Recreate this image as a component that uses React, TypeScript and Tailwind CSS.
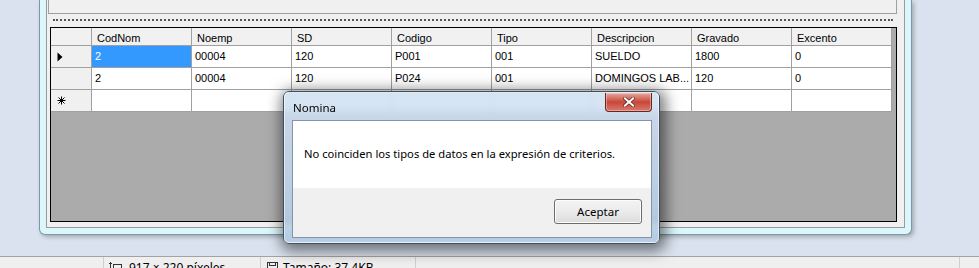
import type { ReactNode } from "react";

const columns = ["CodNom", "Noemp", "SD", "Codigo", "Tipo", "Descripcion", "Gravado", "Excento"];

const rows = [
  ["2", "00004", "120", "P001", "001", "SUELDO", "1800", "0"],
  ["2", "00004", "120", "P024", "001", "DOMINGOS LAB...", "120", "0"],
];

const gridFont = { fontFamily: '"Liberation Sans", Arial, sans-serif' };
const uiFont = { fontFamily: '"Noto Sans", "Liberation Sans", sans-serif' };

function RowHeader({ children }: { children?: ReactNode }) {
  return (
    <div className="flex w-[41px] shrink-0 items-center border-r border-[#a0a0a0] bg-[#f0f0f0] pl-[6px]">
      {children}
    </div>
  );
}

function DataGrid() {
  return (
    <div
      className="ml-[3px] mt-[6px] h-[195px] w-[847px] border border-black bg-[#ababab] text-[11px] text-black"
      style={gridFont}
    >
      {/* header */}
      <div className="flex h-[18px] w-[841px] border-b border-[#a0a0a0] bg-[#f1f1f1]">
        <div className="w-[41px] shrink-0 border-r border-[#a0a0a0]" />
        {columns.map((c) => (
          <div
            key={c}
            className="w-[100px] shrink-0 border-r border-[#a0a0a0] pl-[5px] pt-[3px] leading-[14px]"
          >
            {c}
          </div>
        ))}
      </div>

      {/* data rows */}
      {rows.map((r, i) => (
        <div key={i} className="flex h-[22px] w-[841px] border-b border-[#a0a0a0] bg-white">
          <RowHeader>
            {i === 0 && (
              <svg width="6" height="10" viewBox="0 0 6 10">
                <path d="M0.5 0.5 L5.5 5 L0.5 9.5 Z" fill="#000" />
              </svg>
            )}
          </RowHeader>
          {r.map((v, j) => (
            <div
              key={j}
              className={`w-[100px] shrink-0 overflow-hidden whitespace-nowrap border-r border-[#a0a0a0] pl-[3px] leading-[21px] ${
                i === 0 && j === 0 ? "bg-[#3399ff] text-white" : ""
              }`}
            >
              {v}
            </div>
          ))}
        </div>
      ))}

      {/* new row */}
      <div className="flex h-[22px] w-[841px] border-b border-[#a0a0a0] bg-white">
        <RowHeader>
          <svg width="9" height="9" viewBox="0 0 9 9">
            <path d="M4.5 0.5 V8.5 M0.5 4.5 H8.5 M1.5 1.5 L7.5 7.5 M7.5 1.5 L1.5 7.5" stroke="#000" strokeWidth="1" />
          </svg>
        </RowHeader>
        {columns.map((c) => (
          <div key={c} className="w-[100px] shrink-0 border-r border-[#a0a0a0]" />
        ))}
      </div>
    </div>
  );
}

function MessageBox() {
  return (
    <div
      className="absolute left-[283px] top-[91px] h-[153px] w-[377px] rounded-[6px] border border-[#404f60] bg-[rgba(186,210,236,0.82)] shadow-[2px_3px_14px_4px_rgba(0,0,0,0.5)] backdrop-blur-[3px]"
      style={uiFont}
    >
      <div className="flex h-full flex-col rounded-[5px] border border-[rgba(255,255,255,0.55)] bg-gradient-to-b from-[rgba(255,255,255,0.3)] to-[rgba(160,185,210,0.25)] px-[6px] pb-[4px]">
        {/* title bar */}
        <div className="flex h-[27px] items-center justify-between">
          <span className="pl-[2px] pt-[3px] text-[11.5px] text-black">Nomina</span>
          <div className="flex h-[19px] w-[47px] items-center justify-center self-start rounded-b-[4px] border border-t-0 border-[#6b2520] bg-gradient-to-b from-[#e6a69c] via-[#c8463a] to-[#d77a6d] shadow-[inset_0_0_0_1px_rgba(255,255,255,0.35)]">
            <svg width="12" height="10" viewBox="0 0 12 10">
              <path d="M2 1.5 L10 8.5 M10 1.5 L2 8.5" stroke="#6a2a24" strokeWidth="3.6" strokeLinecap="square" />
              <path d="M2 1.5 L10 8.5 M10 1.5 L2 8.5" stroke="#ffffff" strokeWidth="2" strokeLinecap="square" />
            </svg>
          </div>
        </div>

        {/* client area */}
        <div className="ml-[1px] flex flex-1 flex-col border border-[#8395a8]">
          <div className="flex h-[67px] items-center bg-white pl-[11px] text-[11.2px] text-black">
            No coinciden los tipos de datos en la expresión de criterios.
          </div>
          <div className="flex flex-1 items-start justify-end bg-[#f0f0f0] pr-[9px] pt-[11px]">
            <button className="h-[25px] w-[88px] rounded-[3px] border border-[#6d6d6d] bg-gradient-to-b from-[#f3f3f3] via-[#ebebeb] to-[#dcdcdc] text-[11.5px] text-black shadow-[inset_0_0_0_1px_#fcfcfc]">
              Aceptar
            </button>
          </div>
        </div>
      </div>
    </div>
  );
}

function StatusBar() {
  return (
    <div
      className="flex h-[12px] shrink-0 border-t border-[#a3a3a3] bg-[#f0efef] text-[12px] text-black"
      style={uiFont}
    >
      <div className="w-[104px] shrink-0 border-r border-[#cfcfcf]" />
      <div className="flex w-[157px] shrink-0 items-start gap-[6px] border-r border-[#cfcfcf] pl-[5px] pt-[5px]">
        <svg width="14" height="12" viewBox="0 0 14 12" className="shrink-0">
          <path d="M1.5 0 V12 M0 1.5 H3" stroke="#333" strokeWidth="1" />
          <rect x="4.5" y="2.5" width="8" height="8" fill="none" stroke="#333" strokeWidth="1" />
        </svg>
        <span className="-mt-[2px] leading-[16px]">917 × 220 píxeles</span>
      </div>
      <div className="flex w-[155px] shrink-0 items-start gap-[5px] border-r border-[#cfcfcf] pl-[6px] pt-[5px]">
        <svg width="11" height="12" viewBox="0 0 11 12" className="shrink-0">
          <rect x="0.5" y="0.5" width="10" height="11" fill="none" stroke="#333" strokeWidth="1" />
          <rect x="2.5" y="0.5" width="6" height="3" fill="none" stroke="#333" strokeWidth="1" />
        </svg>
        <span className="-mt-[2px] leading-[16px]">Tamaño: 37,4KB</span>
      </div>
      <div className="w-[544px] shrink-0 border-r border-[#cfcfcf]" />
      <div className="flex-1" />
    </div>
  );
}

export default function App() {
  return (
    <div className="relative flex h-[268px] w-[979px] flex-col overflow-hidden bg-[#d9e2ee]">
      <div className="h-[256px] shrink-0">
        {/* form window */}
        <div className="ml-[39px] h-[235px] w-[873px] rounded-b-[6px] border border-t-0 border-[#7f95a8] bg-[#dcf7fc] px-[6px] pb-[6px] shadow-[2px_2px_4px_rgba(0,0,0,0.25)]">
          <div className="h-full border border-t-0 border-[#9a9a9a] bg-[#f0f0f0]">
            <div className="ml-[1px] h-[14px] w-[849px] border border-t-0 border-[#a0a0a0]" />
            <div className="ml-[6px] mt-[5px] w-[840px] border-t-2 border-dotted border-[#555]" />
            <DataGrid />
          </div>
        </div>
      </div>
      <StatusBar />
      <MessageBox />
    </div>
  );
}
